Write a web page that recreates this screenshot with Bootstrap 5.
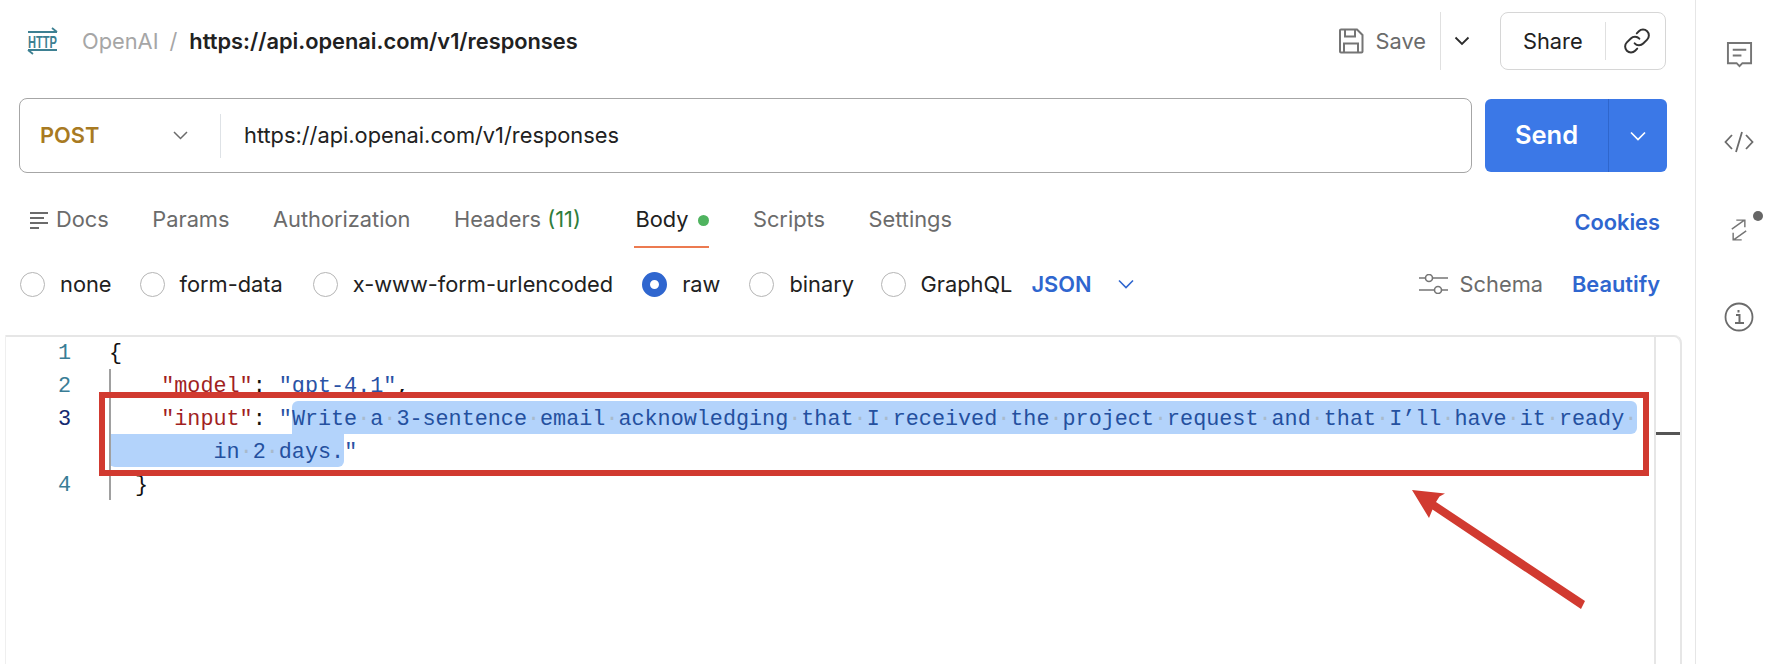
<!DOCTYPE html>
<html lang="en">
<head>
<meta charset="utf-8">
<title>OpenAI responses request</title>
<link href="https://cdn.jsdelivr.net/npm/bootstrap@5.3.0/dist/css/bootstrap.min.css" rel="stylesheet">
<style>
html,body{height:664px;overflow:hidden;background:#fff}
body{font-family:Inter,"Liberation Sans",sans-serif;font-size:21.8px;color:#212121}
.shell{position:relative;width:1776px;height:664px}
.work{width:1695px}
.rail{width:81px;border-left:1px solid #e6e6e6;padding:11px 0 0 6px}
.rail-btn{height:87.5px;display:flex;justify-content:center;align-items:center;position:relative}
.topbar{height:84px;padding:0 29px 2px 27px}
.http-ico{overflow:visible}
.crumb-muted{color:#a6a6a6}
.crumb-gap{margin-left:23px}
.crumb-sep{margin:0 12px 0 11px}
.crumb-title{font-weight:600;color:#212121}
.save-txt{color:#6b6b6b}
.vr-line{width:1px;background:#e0e0e0;align-self:stretch}
.save-group{height:58px;margin-right:30px}
.save-label{margin:0 14px 0 12px}
.save-chev{margin-left:13px}
.share-box{width:166px;height:58px;border:1px solid #d6d6d6;border-radius:8px}
.share-label{width:104px;padding-left:22px}
.share-sep{margin:9px 0}
.share-ico{margin-left:17px}
.urlrow{margin:14px 28px 0 19px;height:75px;gap:13px}
.urlbox{border:1px solid #a6a6a6;border-radius:8px;height:75px}
.method{width:201px;height:44px;padding:0 20px;color:#a87a22;font-weight:600}
.method-chev{margin-right:12px}
.urltext{padding-left:23px;color:#212121}
.sendbox{width:182px;height:73px;background:#3b78e7;border-radius:6px;color:#fff;margin-top:1px}
.send-txt{width:123px;font-weight:600;font-size:25.5px;color:#fff}
.send-split{border-left:1px solid #2f66cc;width:59px}
.tabsrow{height:76px;padding:0 35px 0 29px}
.tab-gap{gap:43.5px}
.tab-item{color:#6b6b6b;padding:18px 0 0;height:76px;line-height:1}
.tab-item:hover{color:#6b6b6b}
.docs-ico{margin-right:7px}
.tab-extra{margin-right:11px}
.tab-on,.tab-on:hover{color:#212121;position:relative}
.tab-on::after{content:"";position:absolute;left:-1px;right:0;bottom:1px;height:2px;background:#ec7a50}
.green{color:#2f7d3b}
.gdot{width:11px;height:11px;border-radius:50%;background:#4fb35f;margin-left:10px}
.linkblue{color:#2f66cf;font-weight:600}
.cookie-link{margin-top:33px}
.radiorow{height:72px;padding:0 35px 2px 20px}
.radio-pick{width:25px;height:25px;margin:0 15px 0 0;border:1px solid #b5b5b5;float:none}
.radio-pick:checked{background-color:#fff;background-image:none;border:8px solid #2f66cf}
.radio-wrap{margin:0 29px 0 0;color:#212121}
.radio-first{margin-right:28px}
.radio-mid{margin-right:30px}
.radio-bin{margin-right:26.5px}
.radio-last{margin-right:19px}
.json-chev{margin-left:26px}
.schema-label{margin:0 29px 0 12px}
.editor{margin:14px 13px 0 5px;height:329px;box-shadow:inset 0 2px 0 #e6e6e6;border-left:1px solid #efefef;border-right:2px solid #e6e6e6;border-top-right-radius:8px;position:relative}
.gutter{width:72px;font-family:"Liberation Mono",monospace;font-size:21.8px;line-height:37px;text-align:right;color:#3a7d96;padding-right:7px}
.gutter .cur{color:#14296f}
.gutter div{height:33px}
.code{font-family:"Liberation Mono",monospace;font-size:21.78px;line-height:37px;padding-left:31px;position:relative;color:#111}
.cl{height:33px;white-space:pre}
.k{color:#a11f1f}
.s{color:#2a52a5}
.sel{display:inline-block;height:33px;background:#b3d3fb;color:#24509f}
.sel-a{border-radius:6px 6px 6px 0}
.sel-b{border-radius:0 0 6px 6px}
.ws{color:#a8bacb}
.guide{position:absolute;left:31px;top:34px;height:131px;width:2px;background:#a0a0a0}
.mini{width:26px;border-left:2px solid #e6e6e6;position:relative}
.mark-line{position:absolute;left:0;right:0;top:97px;height:3px;background:#555}
.red-frame{position:absolute;left:99px;top:392px;width:1550px;height:84px;border:6px solid #d13a30;pointer-events:none}
.arrow-over{position:absolute;left:0;top:0;width:1776px;height:664px;pointer-events:none}
.rail-dot{position:absolute;width:10px;height:10px;border-radius:50%;background:#666;left:51px;top:25px}
</style>
</head>
<body>
<div class="shell d-flex">
  <div class="work d-flex flex-column flex-shrink-0">
    <div class="topbar d-flex align-items-center">
      <svg class="http-ico flex-shrink-0" width="32" height="28" viewBox="0 0 32 28" fill="none" stroke="#3d8092" stroke-width="1.800">
        <path d="M1 5H30M25 1l5 4"/><path d="M1 23H30M6 27l-5-4"/>
        <text x="1" y="20.500" font-family="Liberation Sans,sans-serif" font-size="17" font-weight="700" textLength="29" lengthAdjust="spacingAndGlyphs" fill="#3d8092" stroke="none">HTTP</text>
      </svg>
      <span class="crumb-muted crumb-gap">OpenAI</span>
      <span class="crumb-muted crumb-sep">/</span>
      <span class="crumb-title">https://api.openai.com/v1/responses</span>
      <div class="ms-auto d-flex align-items-center save-group">
        <svg width="26" height="26" viewBox="0 0 26 26" fill="none" stroke="#757575" stroke-width="2"><path d="M2 2.500a1 1 0 0 1 1-1h16l5.500 5.500v16.500a1 1 0 0 1-1 1H3a1 1 0 0 1-1-1z"/><path d="M7 1.500v7h10v-7M6 24.500v-9h14v9"/></svg>
        <span class="save-txt save-label">Save</span>
        <span class="vr-line"></span>
        <svg class="save-chev" width="16" height="10" viewBox="0 0 16 10" fill="none" stroke="#2b2b2b" stroke-width="1.800"><path d="M1.500 1.500 8 8l6.500-6.500"/></svg>
      </div>
      <div class="share-box d-flex align-items-center">
        <span class="share-label">Share</span>
        <span class="vr-line share-sep"></span>
        <svg class="share-ico" width="28" height="28" viewBox="0 0 24 24" fill="none" stroke="#333" stroke-width="1.700" stroke-linecap="round" stroke-linejoin="round"><path d="M10 14a5 5 0 0 0 7.300.2l3.400-3.400a5 5 0 0 0-7.100-7.100l-1.800 1.800"/><path d="M14 10a5 5 0 0 0-7.300-.2l-3.400 3.400a5 5 0 0 0 7.100 7.100l1.800-1.800"/></svg>
      </div>
    </div>

    <div class="urlrow d-flex">
      <div class="urlbox flex-grow-1 d-flex align-items-center">
        <div class="method d-flex align-items-center justify-content-between border-end">
          <span>POST</span>
          <svg class="method-chev" width="15" height="9" viewBox="0 0 15 9" fill="none" stroke="#6b6b6b" stroke-width="1.500"><path d="M1 1l6.500 6.500L14 1"/></svg>
        </div>
        <span class="urltext">https://api.openai.com/v1/responses</span>
      </div>
      <div class="sendbox d-flex align-items-stretch">
        <span class="send-txt d-flex align-items-center justify-content-center">Send</span>
        <span class="send-split d-flex align-items-center justify-content-center">
          <svg width="16" height="10" viewBox="0 0 16 10" fill="none" stroke="#fff" stroke-width="1.700"><path d="M1 1.500l7 7 7-7"/></svg>
        </span>
      </div>
    </div>

    <div class="tabsrow d-flex align-items-start">
      <nav class="nav flex-grow-1 tab-gap">
        <a class="nav-link tab-item d-flex align-items-center" href="#"><svg class="docs-ico" width="20" height="20" viewBox="0 0 20 20" fill="none" stroke="#6b6b6b" stroke-width="2"><path d="M1 3h18M1 8h14M1 13h18M1 18h9"/></svg>Docs</a>
        <a class="nav-link tab-item d-flex align-items-center" href="#">Params</a>
        <a class="nav-link tab-item d-flex align-items-center" href="#">Authorization</a>
        <a class="nav-link tab-item tab-extra d-flex align-items-center" href="#">Headers&nbsp;<span class="green">(11)</span></a>
        <a class="nav-link tab-item tab-on d-flex align-items-center" href="#">Body<span class="gdot"></span></a>
        <a class="nav-link tab-item d-flex align-items-center" href="#">Scripts</a>
        <a class="nav-link tab-item d-flex align-items-center" href="#">Settings</a>
      </nav>
      <span class="linkblue cookie-link">Cookies</span>
    </div>

    <div class="radiorow d-flex align-items-center">
      <label class="radio-wrap radio-first d-flex align-items-center"><input class="form-check-input radio-pick" type="radio" name="bt">none</label>
      <label class="radio-wrap radio-mid d-flex align-items-center"><input class="form-check-input radio-pick" type="radio" name="bt">form-data</label>
      <label class="radio-wrap d-flex align-items-center"><input class="form-check-input radio-pick" type="radio" name="bt">x-www-form-urlencoded</label>
      <label class="radio-wrap d-flex align-items-center"><input class="form-check-input radio-pick" type="radio" name="bt" checked>raw</label>
      <label class="radio-wrap radio-bin d-flex align-items-center"><input class="form-check-input radio-pick" type="radio" name="bt">binary</label>
      <label class="radio-wrap radio-last d-flex align-items-center"><input class="form-check-input radio-pick" type="radio" name="bt">GraphQL</label>
      <span class="linkblue">JSON</span>
      <svg class="json-chev" width="16" height="10" viewBox="0 0 16 10" fill="none" stroke="#2f66cf" stroke-width="1.600"><path d="M1 1.500l7 7 7-7"/></svg>
      <div class="ms-auto d-flex align-items-center">
        <svg width="29" height="20" viewBox="0 0 29 20" fill="none" stroke="#757575" stroke-width="1.600"><path d="M0 4h6M14 4h15M0 16h15M23 16h6"/><circle cx="10" cy="4" r="3.500"/><circle cx="19" cy="16" r="3.500"/></svg>
        <span class="save-txt schema-label">Schema</span>
        <span class="linkblue">Beautify</span>
      </div>
    </div>

    <div class="editor d-flex">
      <div class="gutter flex-shrink-0">
        <div>1</div><div>2</div><div class="cur">3</div><div></div><div>4</div>
      </div>
      <div class="code flex-grow-1">
        <span class="guide"></span>
        <div class="cl">{</div>
        <div class="cl">    <span class="k">"model"</span>: <span class="s">"gpt-4.1"</span>,</div>
        <div class="cl">    <span class="k">"input"</span>: <span class="s">"</span><span class="sel sel-a">Write<span class="ws">·</span>a<span class="ws">·</span>3-sentence<span class="ws">·</span>email<span class="ws">·</span>acknowledging<span class="ws">·</span>that<span class="ws">·</span>I<span class="ws">·</span>received<span class="ws">·</span>the<span class="ws">·</span>project<span class="ws">·</span>request<span class="ws">·</span>and<span class="ws">·</span>that<span class="ws">·</span>I’ll<span class="ws">·</span>have<span class="ws">·</span>it<span class="ws">·</span>ready<span class="ws">·</span></span></div>
        <div class="cl"><span class="sel sel-b">        in<span class="ws">·</span>2<span class="ws">·</span>days.</span><span class="s">"</span></div>
        <div class="cl">  }</div>
      </div>
      <div class="mini flex-shrink-0"><span class="mark-line"></span></div>
    </div>
  </div>

  <div class="rail flex-grow-1 d-flex flex-column">
    <div class="rail-btn">
      <svg width="27" height="27" viewBox="0 0 28 28" fill="none" stroke="#757575" stroke-width="2"><path d="M2 2h24v21h-9l-3 3-3-3H2z"/><path d="M7 9h14M7 15h9"/></svg>
    </div>
    <div class="rail-btn">
      <svg width="30" height="24" viewBox="0 0 30 24" fill="none" stroke="#6b6b6b" stroke-width="1.800"><path d="M8 5 1.500 12 8 19M22 5l6.500 7L22 19M18 2l-6 20"/></svg>
    </div>
    <div class="rail-btn">
      <svg width="18" height="22" viewBox="0 0 20 24" fill="none" stroke="#757575" stroke-width="1.600"><path d="M2 11 16 1M7 1h9.500v8M18 13 4 23M13 23H3.500v-8"/></svg>
      <span class="rail-dot"></span>
    </div>
    <div class="rail-btn">
      <svg width="30" height="30" viewBox="0 0 30 30" fill="none" stroke="#6b6b6b" stroke-width="1.800"><circle cx="15" cy="15" r="13.500"/><path d="M12 13h3.500v7.500M11 21h9M14.500 8v2.500" stroke-width="2"/></svg>
    </div>
  </div>

  <div class="red-frame"></div>
  <svg class="arrow-over" viewBox="0 0 1776 664"><path d="M1585 601 1436 502l3.500-5.500L1445 493.500 1412 490l17 28 3.500-8.500 148.500 99.500z" fill="#d13a30"/></svg>
</div>
</body>
</html>
